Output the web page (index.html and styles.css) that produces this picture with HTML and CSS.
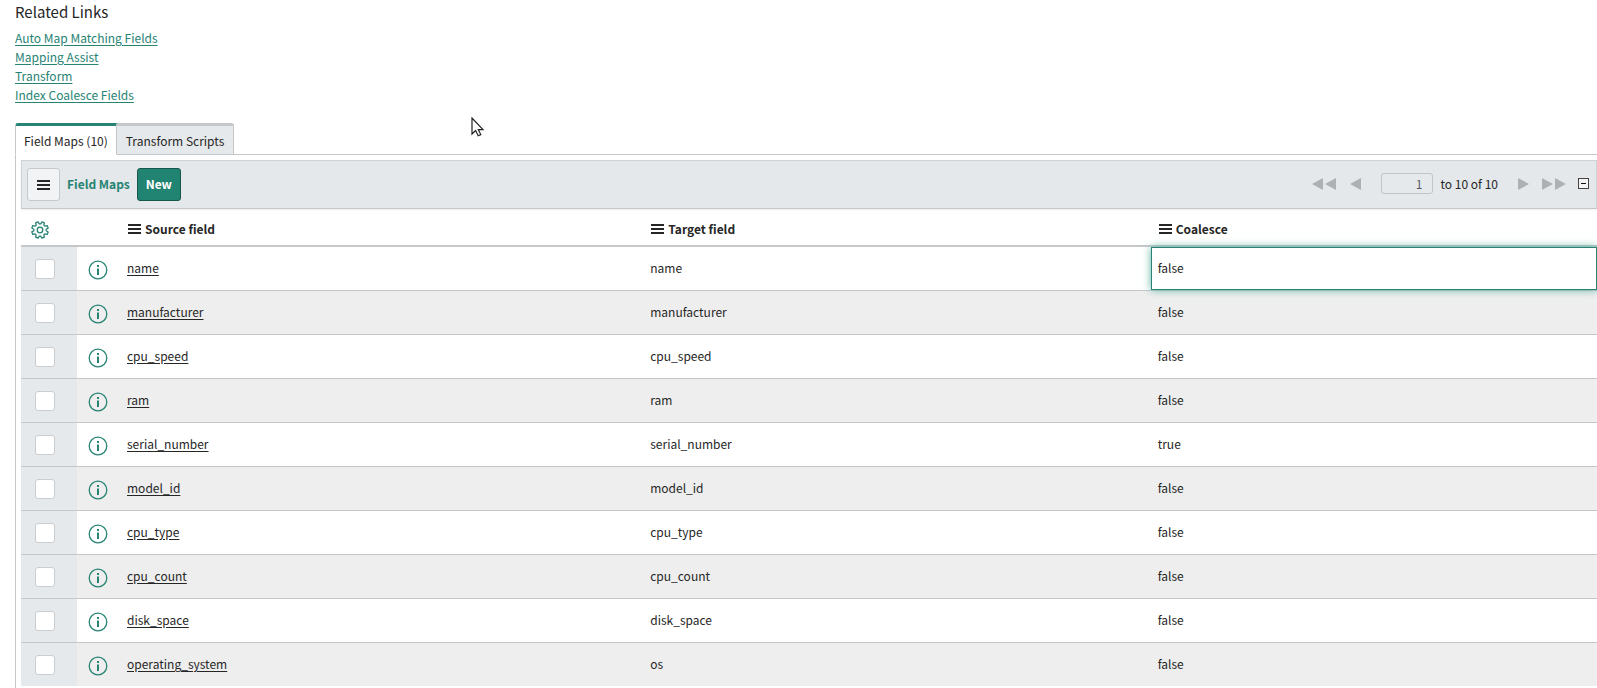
FILE: index.html
```html
<!DOCTYPE html>
<html lang="en">
<head>
    <meta charset="UTF-8">
    <meta name="viewport" content="width=device-width, initial-scale=1.0">
    <title>Field Maps</title>
    <link rel="stylesheet" href="styles.css">
</head>
<body>

<!-- shared icons -->
<svg class="sprite" aria-hidden="true">
    <symbol id="bars" viewBox="0 0 13 10">
        <path d="M0 0h13v2H0zM0 4h13v2H0zM0 8h13v2H0z"/>
    </symbol>
    <symbol id="info" viewBox="0 0 20 20">
        <circle cx="10" cy="10" r="8.8" fill="none" stroke="currentColor" stroke-width="1.3"/>
        <path d="M9 8.4h2V15H9zM9 5h2v2H9z"/>
    </symbol>
    <symbol id="prev" viewBox="0 0 11 12"><path d="M11 0v12L0 6z"/></symbol>
    <symbol id="next" viewBox="0 0 11 12"><path d="M0 0v12l11-6z"/></symbol>
    <symbol id="first" viewBox="0 0 24 12"><path d="M11 0v12L0 6zM24 0v12L13 6z"/></symbol>
    <symbol id="last" viewBox="0 0 24 12"><path d="M0 0v12l11-6zM13 0v12l11-6z"/></symbol>
</svg>

<section class="related">
    <h2>Related Links</h2>
    <ul>
        <li><a href="#">Auto Map Matching Fields</a></li>
        <li><a href="#">Mapping Assist</a></li>
        <li><a href="#">Transform</a></li>
        <li><a href="#">Index Coalesce Fields</a></li>
    </ul>
</section>

<div class="tabs" role="tablist">
    <button type="button" class="tab active" role="tab" aria-selected="true">Field Maps (10)</button>
    <button type="button" class="tab" role="tab" aria-selected="false">Transform Scripts</button>
</div>

<main class="panel">
    <div class="toolbar">
        <button type="button" class="menuButton" aria-label="List menu"><svg width="13" height="10"><use href="#bars"/></svg></button>
        <a href="#" class="listTitle">Field Maps</a>
        <button type="button" class="newButton">New</button>
        <div class="pager">
            <button type="button" class="double" aria-label="First page"><svg width="24" height="12"><use href="#first"/></svg></button>
            <button type="button" class="single" aria-label="Previous page"><svg width="11" height="12"><use href="#prev"/></svg></button>
            <input type="text" id="firstRow" value="1" aria-label="Skip to row">
            <label for="firstRow">to 10 of 10</label>
            <button type="button" class="single" aria-label="Next page"><svg width="11" height="12"><use href="#next"/></svg></button>
            <button type="button" class="double" aria-label="Last page"><svg width="24" height="12"><use href="#last"/></svg></button>
            <button type="button" class="collapse" aria-label="Collapse list"></button>
        </div>
    </div>

    <table>
        <colgroup>
            <col class="colCheck">
            <col class="colInfo">
            <col class="colSource">
            <col class="colTarget">
            <col>
        </colgroup>
        <thead>
            <tr>
                <th class="gearCell">
                    <button type="button" aria-label="Personalize list">
                        <svg width="18" height="18" viewBox="0 0 18 18" stroke="currentColor" stroke-width="1.3" stroke-linejoin="round">
                            <path transform="rotate(22.5 9 9)" d="M10.7 3 12 3.6 13.9 2.2 15.8 4.1 14.4 6 15 7.3 17.3 7.7V10.3L15 10.7 14.4 12 15.8 13.9 13.9 15.8 12 14.4 10.7 15 10.3 17.3H7.7L7.3 15 6 14.4 4.1 15.8 2.2 13.9 3.6 12 3 10.7.7 10.3V7.7L3 7.3 3.6 6 2.2 4.1 4.1 2.2 6 3.6 7.3 3 7.7.7H10.3z"/>
                            <circle cx="9" cy="9" r="2.8"/>
                        </svg>
                    </button>
                </th>
                <th></th>
                <th><svg width="13" height="10"><use href="#bars"/></svg>Source field</th>
                <th><svg width="13" height="10"><use href="#bars"/></svg>Target field</th>
                <th><svg width="13" height="10"><use href="#bars"/></svg>Coalesce</th>
            </tr>
        </thead>
        <tbody id="rows"></tbody>
    </table>
</main>

<svg class="cursor" width="14" height="21" viewBox="0 0 14 21" aria-hidden="true">
    <path d="M1 1v16l3.6-3.4 2.6 5.2 2.6-1.2-2.5-5H12z" fill="#fff" stroke="#222" stroke-width="1.2"/>
</svg>

<script>
    const fieldMaps = [
        ['name', 'name', 'false'],
        ['manufacturer', 'manufacturer', 'false'],
        ['cpu_speed', 'cpu_speed', 'false'],
        ['ram', 'ram', 'false'],
        ['serial_number', 'serial_number', 'true'],
        ['model_id', 'model_id', 'false'],
        ['cpu_type', 'cpu_type', 'false'],
        ['cpu_count', 'cpu_count', 'false'],
        ['disk_space', 'disk_space', 'false'],
        ['operating_system', 'os', 'false']
    ];

    function displayRows() {
        const rows = document.getElementById('rows');
        fieldMaps.forEach(([source, target, coalesce], index) => {
            const tr = document.createElement('tr');
            tr.innerHTML = `
                <td class="checkCell"><input type="checkbox" aria-label="Select ${source}"></td>
                <td class="infoCell"><button type="button" aria-label="Preview ${source}"><svg width="20" height="20"><use href="#info"/></svg></button></td>
                <td><a href="#">${source}</a></td>
                <td>${target}</td>
                <td class="${index === 0 ? 'selected' : ''}">${coalesce}</td>
            `;
            rows.appendChild(tr);
        });
    }

    displayRows();
</script>

</body>
</html>
```
FILE: styles.css
```css
* {
    box-sizing: border-box;
}
body {
    display: flex;
    flex-direction: column;
    min-height: 100vh;
    margin: 0;
    padding-left: 15px;
    background-color: #fff;
    color: #262626;
    font-family: "Source Sans Pro", "Noto Sans CJK SC", sans-serif;
    font-size: 12px;
    line-height: 19px;
}
button, input {
    margin: 0;
    font: inherit;
    color: inherit;
}
button {
    padding: 0;
    border: none;
    background: none;
    cursor: pointer;
}
svg {
    display: block;
    fill: currentColor;
}
.sprite {
    position: absolute;
    width: 0;
    height: 0;
}
.related h2 {
    margin: 0 0 4px;
    font-size: 15px;
    font-weight: 400;
    line-height: 24px;
}
.related ul {
    list-style-type: none;
    margin: 0;
    padding: 0;
}
.related a {
    color: #278374;
    text-underline-offset: 2px;
}
.tabs {
    display: flex;
    margin-top: 19px;
    border-bottom: 1px solid #c5c7c9;
}
.tab {
    height: 32px;
    margin-bottom: -1px;
    padding: 0 9px;
    border: 1px solid #c5c7c9;
    border-top: 3px solid #c5c7c9;
    border-left: none;
    border-radius: 0 3px 0 0;
    background-color: #e6e9eb;
}
.tab.active {
    padding: 0 8px;
    border-top-color: #278374;
    border-left: 1px solid #c5c7c9;
    border-bottom-color: #fff;
    border-radius: 3px 0 0 0;
    background-color: #fff;
}
.panel {
    flex: 1;
    padding: 5px 0 2px 5px;
    border-left: 1px solid #c5c7c9;
}
.toolbar {
    display: flex;
    align-items: center;
    height: 49px;
    padding: 0 7px 0 5px;
    border: 1px solid #cfd2d4;
    border-bottom-color: #c5c7c9;
    background-color: #e4e8ea;
    box-shadow: 0 1px 2px #eee;
}
.menuButton, .newButton {
    height: 33px;
    border: 1px solid #c5c9cc;
    border-radius: 3px;
}
.menuButton {
    display: flex;
    align-items: center;
    justify-content: center;
    width: 33px;
    background-color: #f1f3f5;
}
.listTitle {
    margin: 0 7px;
    padding-bottom: 2px;
    color: #278374;
    font-weight: 700;
    text-decoration: none;
}
.newButton {
    width: 44px;
    padding-bottom: 2px;
    border-color: #17584d;
    background-color: #218371;
    color: #fff;
    font-weight: 700;
}
.pager {
    display: flex;
    align-items: center;
    margin-left: auto;
    padding-bottom: 2px;
}
.pager button {
    color: #adb1b4;
}
.pager .double + .single {
    margin-left: 14px;
}
.pager .single + .double {
    margin-left: 13px;
}
.pager input {
    width: 52px;
    height: 21px;
    margin: 0 8px 0 20px;
    padding: 0 9px;
    border: 1px solid #c0c4c8;
    border-radius: 3px;
    background-color: #e6e9eb;
    color: #555a66;
    text-align: right;
}
.pager label {
    margin-right: 20px;
}
.pager .collapse {
    display: flex;
    align-items: center;
    justify-content: center;
    width: 11px;
    height: 11px;
    margin-left: 12px;
    border: 1px solid #444;
    background-color: #f4f4f4;
}
.collapse::before {
    content: "";
    width: 5px;
    height: 1px;
    background-color: #111;
}
table {
    width: 100%;
    border-collapse: separate;
    border-spacing: 0;
    table-layout: fixed;
}
.colCheck {
    width: 56px;
}
.colInfo {
    width: 43px;
}
.colSource {
    width: 33.2%;
}
.colTarget {
    width: 32.2%;
}
th {
    height: 38px;
    padding: 2px 7px 0;
    border-bottom: 2px solid #c5c7c9;
    text-align: left;
}
th > svg {
    display: inline-block;
    margin: 0 4px 0 1px;
}
th.gearCell {
    padding: 6px 0 0 10px;
    color: #278374;
}
.gearCell button {
    display: block;
}
.gearCell svg {
    fill: none;
}
td {
    height: 44px;
    padding: 0 7px 2px;
    border-bottom: 1px solid #c5c7c9;
}
tbody tr:nth-child(even) {
    background-color: #eee;
}
tbody tr:last-child td {
    height: 43px;
    border-bottom: none;
}
td a {
    color: inherit;
    text-underline-offset: 2px;
}
td.checkCell {
    padding: 0 0 0 14px;
    background-color: #e6e9eb;
}
.checkCell input {
    display: block;
    appearance: none;
    width: 20px;
    height: 20px;
    border: 1px solid #c9cdd1;
    border-radius: 3px;
    background-color: #fff;
}
td.infoCell {
    padding: 3px 0 0 11px;
}
.infoCell button {
    display: block;
    color: #278374;
}
td.selected {
    position: relative;
}
/* focus ring of the active cell */
td.selected::after {
    content: "";
    position: absolute;
    inset: 0;
    border: 1px solid #278374;
    box-shadow: 0 0 8px #5fb3a3;
}
.cursor {
    position: absolute;
    top: 117px;
    left: 471px;
}
```
